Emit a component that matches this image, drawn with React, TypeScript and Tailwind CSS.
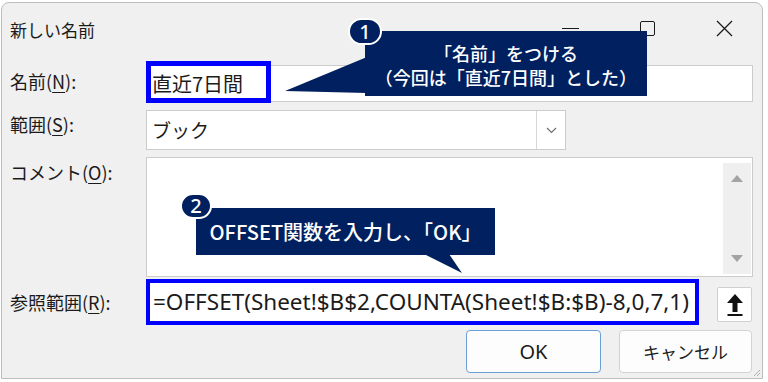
const navy = "#002060";

function Label({ children, className }: { children: React.ReactNode; className: string }) {
  return <div className={`w-[136px] shrink-0 text-[18px] leading-[24px] ${className}`}>{children}</div>;
}

function Key({ children }: { children: React.ReactNode }) {
  return <span className="underline underline-offset-[3px] decoration-[1px]">{children}</span>;
}

function Badge({ n, className }: { n: string; className: string }) {
  return (
    <div
      className={`absolute flex items-center justify-center rounded-full border-2 border-white bg-[#002060] font-['Noto_Sans',sans-serif] text-[20px] font-medium leading-none text-white ${className}`}
    >
      {n}
    </div>
  );
}

export default function App() {
  return (
    <div className="relative h-[382px] w-[768px] overflow-hidden bg-white font-['Noto_Sans_CJK_JP',sans-serif] text-[#1b1b1b]">
      <div className="relative ml-[1px] mt-[2px] flex h-[377px] w-[762px] flex-col rounded-t-[8px] border border-[#bdbdbd] bg-[#f0f0f0]">
        {/* title bar */}
        <div className="flex h-[54px] items-center">
          <span className="pl-[8px] text-[17px]">新しい名前</span>
          <div className="ml-auto flex h-full pb-[4px]">
            <div className="flex w-[77px] items-center justify-center">
              <span className="block h-px w-[17px] bg-[#1b1b1b]" />
            </div>
            <div className="flex w-[77px] items-center justify-center">
              <span className="block h-[15px] w-[15px] rounded-[2px] border-[1.5px] border-[#1b1b1b]" />
            </div>
            <div className="flex w-[76px] items-center justify-center">
              <svg width="17" height="17" viewBox="0 0 17 17">
                <path d="M1 1L16 16M16 1L1 16" stroke="#1b1b1b" strokeWidth="1.3" />
              </svg>
            </div>
          </div>
        </div>

        <div className="flex flex-col pl-[8px] pr-[9px]">
          {/* name */}
          <div className="mt-[8px] flex h-[37px]">
            <Label className="pt-[4px]">
              名前(<Key>N</Key>):
            </Label>
            <div className="relative flex flex-1 items-center border border-[#cccccc] bg-white pl-[5px] text-[20px]">
              直近7日間
              <span className="absolute left-[-1px] top-[-5px] h-[42px] w-[125px] border-[5px] border-[#0000ff]" />
            </div>
          </div>

          {/* scope */}
          <div className="mt-[8px] flex h-[40px]">
            <Label className="pt-[2px]">
              範囲(<Key>S</Key>):
            </Label>
            <div className="flex w-[420px] border border-[#cccccc] bg-white">
              <div className="flex flex-1 items-center pl-[5px] text-[19px]">ブック</div>
              <div className="flex w-[29px] items-center justify-center border-l border-[#d6d6d6]">
                <svg width="11" height="7" viewBox="0 0 11 7">
                  <path d="M1 1L5.5 5.5L10 1" fill="none" stroke="#6b6b6b" strokeWidth="1.1" />
                </svg>
              </div>
            </div>
          </div>

          {/* comment */}
          <div className="mt-[7px] flex h-[120px]">
            <Label className="pt-[3px]">
              コメント(<Key>O</Key>):
            </Label>
            <div className="flex flex-1 justify-end border border-[#cccccc] bg-white pb-[2px] pr-[1px] pt-[5px]">
              <div className="flex w-[28px] flex-col items-center justify-between bg-[#efefef] py-[12px]">
                <svg width="12" height="7" viewBox="0 0 12 7">
                  <path d="M6 0L12 7H0Z" fill="#a3a3a3" />
                </svg>
                <svg width="12" height="7" viewBox="0 0 12 7">
                  <path d="M0 0H12L6 7Z" fill="#a3a3a3" />
                </svg>
              </div>
            </div>
          </div>

          {/* reference */}
          <div className="mt-[2px] flex h-[46px]">
            <Label className="pt-[11px]">
              参照範囲(<Key>R</Key>):
            </Label>
            <div className="flex w-[553px] items-center border-4 border-[#0000ff] bg-white pl-[3px] font-['Noto_Sans',sans-serif] text-[22.5px]">
              =OFFSET(Sheet!$B$2,COUNTA(Sheet!$B:$B)-8,0,7,1)
            </div>
            <div className="ml-[18px] mt-[8px] flex h-[35px] w-[35px] items-center justify-center rounded-[2px] border border-[#d0d0d0] bg-white">
              <svg width="18" height="24" viewBox="0 0 18 24">
                <path d="M9 1L17 10H11.5V19H6.5V10H1Z" fill="#111" />
                <rect x="1.5" y="21" width="15" height="2" fill="#111" />
              </svg>
            </div>
          </div>

          {/* buttons */}
          <div className="mt-[5px] flex h-[43px] justify-end gap-[18px] pr-[1px]">
            <button className="w-[135px] rounded-[4px] border border-[#6b9fd8] bg-[#fdfdfd] font-['Noto_Sans',sans-serif] text-[20px]">
              OK
            </button>
            <button className="w-[133px] rounded-[4px] border border-[#d3d3d3] bg-[#fdfdfd] text-[17px]">
              キャンセル
            </button>
          </div>
        </div>

        {/* resize grip */}
        <svg className="absolute bottom-[1px] right-[1px]" width="8" height="8" viewBox="0 0 8 8">
          <path d="M7 1L1 7M7 4L4 7" stroke="#b0b0b0" strokeWidth="1" />
        </svg>
      </div>

      {/* callout tails */}
      <svg className="pointer-events-none absolute left-0 top-0" width="768" height="382">
        <polygon points="285,91 367,57 367,93" fill={navy} />
        <polygon points="424,254 449,254 462,273" fill={navy} />
      </svg>

      {/* callout 1 */}
      <div className="absolute left-[365px] top-[31px] flex h-[65px] w-[282px] flex-col items-center justify-center bg-[#002060] pt-[2px] text-center text-[18px] font-medium leading-[24px] text-white">
        <p className="h-[24px]">「名前」をつける</p>
        <p className="h-[24px]">（今回は「直近7日間」とした）</p>
      </div>
      <Badge n="1" className="left-[348px] top-[18px] h-[27px] w-[34px]" />

      {/* callout 2 */}
      <div className="absolute left-[196px] top-[208px] flex h-[47px] w-[299px] items-center justify-center bg-[#002060] text-[20px] font-medium text-white">
        OFFSET関数を入力し、「OK」
      </div>
      <Badge n="2" className="left-[180px] top-[193px] h-[26px] w-[32px]" />
    </div>
  );
}
